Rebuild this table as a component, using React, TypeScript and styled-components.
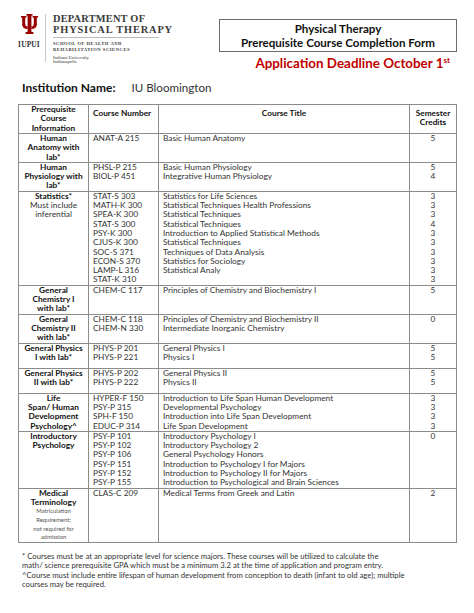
import React from "react";
import styled, { createGlobalStyle } from "styled-components";

const GlobalStyle = createGlobalStyle`
  html, body { margin: 0; padding: 0; background: #fff; }
  body { font-family: Lato, "Liberation Sans", sans-serif; color: #222; }
`;

const Page = styled.div`
  width: 474px;
  height: 613px;
  box-sizing: border-box;
  padding: 14px 18px 0 18px;
  display: flex;
  flex-direction: column;
`;

const Header = styled.header`
  display: flex;
  justify-content: space-between;
  align-items: flex-start;
  margin-left: -2px;
  margin-right: -1px;
`;

const Logo = styled.div`
  display: flex;
  align-items: flex-start;
`;

const Mark = styled.div`
  width: 26px;
  display: flex;
  flex-direction: column;
  align-items: center;
`;

const MarkText = styled.div`
  font-family: "Liberation Serif", serif;
  font-weight: bold;
  font-size: 7.5px;
  color: #333;
  margin-top: 6px;
  letter-spacing: 0.1px;
`;

const Divider = styled.div`
  width: 1px;
  height: 48px;
  background: #c8c8c8;
  margin: 0 7px 0 3px;
`;

const DeptText = styled.div`
  display: flex;
  flex-direction: column;
  font-family: "Liberation Serif", serif;
  color: #3a3a3a;
`;

const DeptName = styled.div<{ $spacing: number }>`
  font-weight: bold;
  font-size: 10.4px;
  line-height: 10.5px;
  letter-spacing: ${(p) => p.$spacing}px;
  white-space: nowrap;
`;

const DeptRule = styled.div`
  height: 1px;
  background: #bbb;
  margin: 1.5px 0 3px;
  width: 106px;
`;

const SchoolLine = styled.div`
  font-weight: bold;
  font-size: 4.6px;
  line-height: 6px;
  letter-spacing: 0.55px;
  white-space: nowrap;
`;

const CampusLine = styled.div`
  font-size: 4.8px;
  line-height: 4.8px;
  white-space: nowrap;
`;

const CampusBlock = styled.div`
  margin-top: 3px;
`;

const TitleSide = styled.div`
  display: flex;
  flex-direction: column;
  align-items: flex-end;
  margin-top: 5px;
`;

const TitleBox = styled.div`
  width: 238px;
  height: 33px;
  box-sizing: border-box;
  border: 1px solid #6a6a6a;
  display: flex;
  flex-direction: column;
  justify-content: center;
  align-items: center;
  font-weight: bold;
  font-size: 11.6px;
  line-height: 13.6px;
  color: #111;
`;

const Deadline = styled.div`
  margin-top: 4px;
  margin-right: 7px;
  color: #c00000;
  font-weight: bold;
  font-size: 13.4px;
  line-height: 15px;
  sup {
    font-size: 8px;
    line-height: 0;
    vertical-align: 5px;
  }
`;

const Institution = styled.div`
  display: flex;
  gap: 16px;
  margin: 10px 0 0 4px;
  font-size: 12px;
  line-height: 14px;
  color: #111;
`;

const InstLabel = styled.span`
  font-weight: bold;
`;

const InstValue = styled.span`
  color: #333;
  font-size: 11.6px;
`;

const Table = styled.table`
  margin-top: 9px;
  width: 438px;
  table-layout: fixed;
  border-collapse: collapse;
  font-size: 8.3px;
  line-height: 9.3px;
  color: #333;
`;

const Row = styled.tr<{ $h: number }>`
  height: ${(p) => p.$h}px;
`;

const Cell = styled.td<{ $center?: boolean; $top?: number }>`
  border: 1px solid #8c8c8c;
  vertical-align: top;
  padding: ${(p) => p.$top ?? 0}px 4px 0;
  text-align: ${(p) => (p.$center ? "center" : "left")};
  white-space: nowrap;
  overflow: hidden;
`;

const HeadCell = styled(Cell).attrs({ as: "th" })`
  font-weight: bold;
  color: #111;
`;

const Line = styled.div<{ $kind?: "b" | "n" | "s" }>`
  font-weight: ${(p) => (p.$kind === "b" ? "bold" : "normal")};
  color: ${(p) => (p.$kind === "b" ? "#111" : p.$kind === "s" ? "#555" : "#333")};
  font-size: ${(p) => (p.$kind === "s" ? "5.9px" : "inherit")};
  line-height: ${(p) => (p.$kind === "s" ? "8.7px" : "inherit")};
`;

const Notes = styled.div`
  margin: 9px 0 0 4px;
  font-size: 7.7px;
  line-height: 9.4px;
  color: #333;
  white-space: nowrap;
`;

type InfoLine = [string, "b" | "n" | "s"];

type Course = {
  h: number;
  info: InfoLine[];
  nums: string[];
  titles: string[];
  credits: string[];
};

const b = (t: string): InfoLine => [t, "b"];
const n = (t: string): InfoLine => [t, "n"];
const s = (t: string): InfoLine => [t, "s"];

const courses: Course[] = [
  {
    h: 28,
    info: [b("Human"), b("Anatomy with"), b("lab*")],
    nums: ["ANAT-A 215"],
    titles: ["Basic Human Anatomy"],
    credits: ["5"],
  },
  {
    h: 28,
    info: [b("Human"), b("Physiology with"), b("lab*")],
    nums: ["PHSL-P 215", "BIOL-P 451"],
    titles: ["Basic Human Physiology", "Integrative Human Physiology"],
    credits: ["5", "4"],
  },
  {
    h: 93,
    info: [b("Statistics*"), n("Must include"), n("inferential")],
    nums: [
      "STAT-S 303",
      "MATH-K 300",
      "SPEA-K 300",
      "STAT-S 300",
      "PSY-K 300",
      "CJUS-K 300",
      "SOC-S 371",
      "ECON-S 370",
      "LAMP-L 316",
      "STAT-K 310",
    ],
    titles: [
      "Statistics for Life Sciences",
      "Statistical Techniques Health Professions",
      "Statistical Techniques",
      "Statistical Techniques",
      "Introduction to Applied Statistical Methods",
      "Statistical Techniques",
      "Techniques of Data Analysis",
      "Statistics for Sociology",
      "Statistical Analy",
    ],
    credits: ["3", "3", "3", "4", "3", "3", "3", "3", "3", "3"],
  },
  {
    h: 28,
    info: [b("General"), b("Chemistry I"), b("with lab*")],
    nums: ["CHEM-C 117"],
    titles: ["Principles of Chemistry and Biochemistry I"],
    credits: ["5"],
  },
  {
    h: 29,
    info: [b("General"), b("Chemistry II"), b("with lab*")],
    nums: ["CHEM-C 118", "CHEM-N 330"],
    titles: ["Principles of Chemistry and Biochemistry II", "Intermediate Inorganic Chemistry"],
    credits: ["0"],
  },
  {
    h: 25,
    info: [b("General Physics"), b("I with lab*")],
    nums: ["PHYS-P 201", "PHYS-P 221"],
    titles: ["General Physics I", "Physics I"],
    credits: ["5", "5"],
  },
  {
    h: 25,
    info: [b("General Physics"), b("II with lab*")],
    nums: ["PHYS-P 202", "PHYS-P 222"],
    titles: ["General Physics II", "Physics II"],
    credits: ["5", "5"],
  },
  {
    h: 38,
    info: [b("Life"), b("Span/ Human"), b("Development"), b("Psychology^")],
    nums: ["HYPER-F 150", "PSY-P 315", "SPH-F 150", "EDUC-P 314"],
    titles: [
      "Introduction to Life Span Human Development",
      "Developmental Psychology",
      "Introduction into Life Span Development",
      "Life Span Development",
    ],
    credits: ["3", "3", "3", "3"],
  },
  {
    h: 56,
    info: [b("Introductory"), b("Psychology")],
    nums: ["PSY-P 101", "PSY-P 102", "PSY-P 106", "PSY-P 151", "PSY-P 152", "PSY-P 155"],
    titles: [
      "Introductory Psychology I",
      "Introductory Psychology 2",
      "General Psychology Honors",
      "Introduction to Psychology I for Majors",
      "Introduction to Psychology II for Majors",
      "Introduction to Psychological and Brain Sciences",
    ],
    credits: ["0"],
  },
  {
    h: 53,
    info: [
      b("Medical"),
      b("Terminology"),
      s("Matriculation"),
      s("Requirement;"),
      s("not required for"),
      s("admission"),
    ],
    nums: ["CLAS-C 209"],
    titles: ["Medical Terms from Greek and Latin"],
    credits: ["2"],
  },
];

const Trident = () => (
  <svg width="17" height="20" viewBox="0 0 17 20">
    <g fill="#990000">
      <rect x="6.6" y="1" width="3.8" height="17.6" />
      <rect x="5.4" y="0" width="6.2" height="1.6" />
      <rect x="4.6" y="18" width="7.8" height="2" />
      <rect x="1.2" y="3" width="3" height="8" />
      <rect x="12.8" y="3" width="3" height="8" />
      <rect x="0" y="2" width="5.4" height="1.6" />
      <rect x="11.6" y="2" width="5.4" height="1.6" />
      <path d="M1.2 10 h3 c0 1.6 0.8 2.3 2.4 2.3 v2.8 c-3.6 0 -5.4 -1.8 -5.4 -5.1 z" />
      <path d="M15.8 10 h-3 c0 1.6 -0.8 2.3 -2.4 2.3 v2.8 c3.6 0 5.4 -1.8 5.4 -5.1 z" />
    </g>
  </svg>
);

export default function App() {
  return (
    <>
      <GlobalStyle />
      <Page>
        <Header>
          <Logo>
            <Mark>
              <Trident />
              <MarkText>IUPUI</MarkText>
            </Mark>
            <Divider />
            <DeptText>
              <DeptName $spacing={0.2}>DEPARTMENT OF</DeptName>
              <DeptName $spacing={0.85}>PHYSICAL THERAPY</DeptName>
              <DeptRule />
              <SchoolLine>SCHOOL OF HEALTH AND</SchoolLine>
              <SchoolLine>REHABILITATION SCIENCES</SchoolLine>
              <CampusBlock>
                <CampusLine>Indiana University</CampusLine>
                <CampusLine>Indianapolis</CampusLine>
              </CampusBlock>
            </DeptText>
          </Logo>
          <TitleSide>
            <TitleBox>
              <div>Physical Therapy</div>
              <div>Prerequisite Course Completion Form</div>
            </TitleBox>
            <Deadline>
              Application Deadline October 1<sup>st</sup>
            </Deadline>
          </TitleSide>
        </Header>

        <Institution>
          <InstLabel>Institution Name:</InstLabel>
          <InstValue>IU Bloomington</InstValue>
        </Institution>

        <Table>
          <colgroup>
            <col style={{ width: 70 }} />
            <col style={{ width: 70 }} />
            <col style={{ width: 251 }} />
            <col style={{ width: 47 }} />
          </colgroup>
          <thead>
            <Row $h={29}>
              <HeadCell $center>
                Prerequisite
                <br />
                Course
                <br />
                Information
              </HeadCell>
              <HeadCell $top={4}>Course Number</HeadCell>
              <HeadCell $center $top={4}>
                Course Title
              </HeadCell>
              <HeadCell $center $top={4}>
                Semester
                <br />
                Credits
              </HeadCell>
            </Row>
          </thead>
          <tbody>
            {courses.map((c, i) => (
              <Row key={i} $h={c.h}>
                <Cell $center>
                  {c.info.map(([t, k], j) => (
                    <Line key={j} $kind={k}>
                      {t}
                    </Line>
                  ))}
                </Cell>
                <Cell>
                  {c.nums.map((t, j) => (
                    <Line key={j}>{t}</Line>
                  ))}
                </Cell>
                <Cell>
                  {c.titles.map((t, j) => (
                    <Line key={j}>{t}</Line>
                  ))}
                </Cell>
                <Cell $center>
                  {c.credits.map((t, j) => (
                    <Line key={j}>{t}</Line>
                  ))}
                </Cell>
              </Row>
            ))}
          </tbody>
        </Table>

        <Notes>
          * Courses must be at an appropriate level for science majors. These courses will be utilized to calculate the
          <br />
          math/ science prerequisite GPA which must be a minimum 3.2 at the time of application and program entry.
          <br />
          ^Course must include entire lifespan of human development from conception to death (infant to old age); multiple
          <br />
          courses may be required.
        </Notes>
      </Page>
    </>
  );
}
